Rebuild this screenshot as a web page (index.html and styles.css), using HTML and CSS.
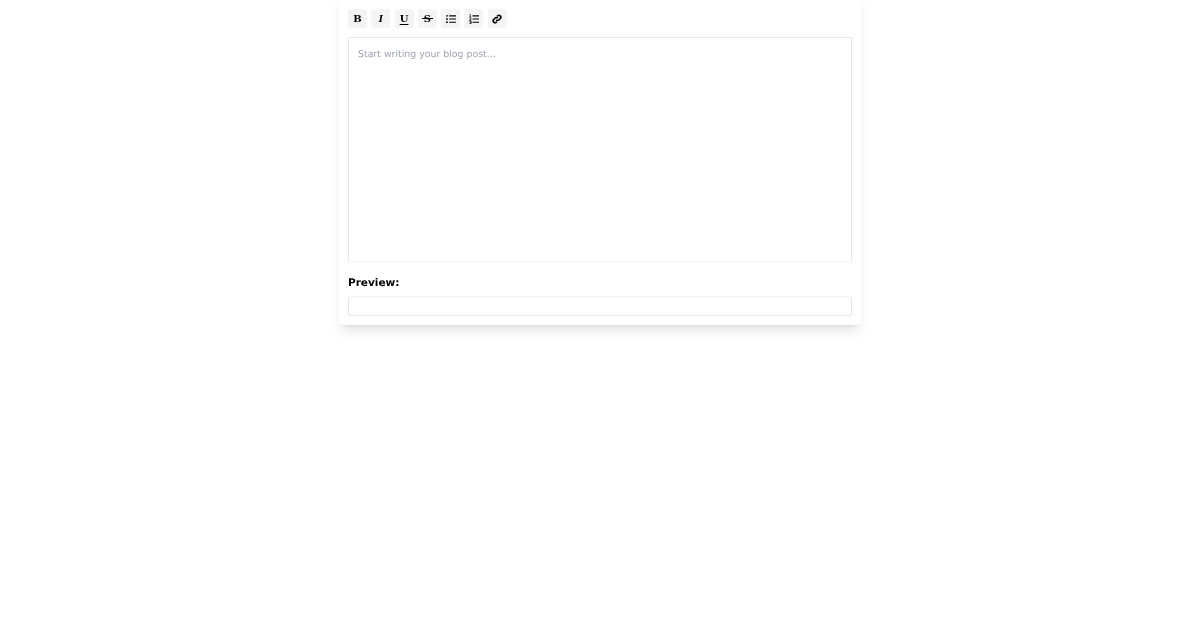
FILE: index.html
```html
<!DOCTYPE html>
<html lang="en">

<head>
	<meta charset="UTF-8">
	<title>Blog editor</title>
	<link rel="stylesheet" href="styles.css">
</head>

<body>

	<div class="card">

		<div class="toolbar">
			<button class="tool" type="button">B</button>
			<button class="tool tool-i" type="button">I</button>
			<button class="tool tool-u" type="button">U</button>
			<button class="tool tool-s" type="button">S</button>
			<button class="tool" type="button">
				<svg class="icon" viewBox="0 0 12 12">
					<circle cx="1.2" cy="2.2" r="1.1" />
					<circle cx="1.2" cy="6" r="1.1" />
					<circle cx="1.2" cy="9.8" r="1.1" />
					<path d="M3.8 2.2H12M3.8 6H12M3.8 9.8H12" class="line" />
				</svg>
			</button>
			<button class="tool" type="button">
				<svg class="icon" viewBox="0 0 12 12">
					<path d="M.5 .7h1.2v2.6M.4 3.5h2.4M.5 5h2v1.2l-2 1.2v.4h2.3M.5 9h2.2v2.4H.5M1.2 10.2h1.5" class="thin" />
					<path d="M4.2 2.2H12M4.2 6H12M4.2 9.8H12" class="line" />
				</svg>
			</button>
			<button class="tool" type="button">
				<svg class="icon" viewBox="0 0 12 12">
					<path d="M5 7a2.2 2.2 0 0 0 3.2.2l2-2a2.3 2.3 0 0 0-3.2-3.2l-.8.8" class="link" />
					<path d="M7 5a2.2 2.2 0 0 0-3.2-.2l-2 2A2.3 2.3 0 0 0 5 10l.8-.8" class="link" />
				</svg>
			</button>
		</div>

		<div class="editor">
			<span class="placeholder">Start writing your blog post...</span>
		</div>

		<div class="preview-label">Preview:</div>
		<div class="preview"></div>

	</div> <!-- end card -->

</body>

</html>
```

FILE: styles.css
```css
body {
	background: #fff;
	font-family: 'DejaVu Sans', sans-serif;
	margin: 0;
	min-height: 100vh;
	text-rendering: geometricPrecision;
}

.card {
	background: #fff;
	border-radius: 5px;
	box-shadow: 0 7.5px 11px -2px rgba(0, 0, 0, .1), 0 3px 4.5px -3px rgba(0, 0, 0, .1);
	box-sizing: border-box;
	height: 331px;
	margin: -6px auto 0;
	padding: 15px 9px 0;
	width: 522px;
	will-change: transform;
}

.toolbar {
	display: flex;
	gap: 4.3px;
	margin-bottom: 9px;
}

.tool {
	align-items: center;
	background: #f3f4f6;
	border: 0;
	border-radius: 3px;
	color: #000;
	display: flex;
	font-family: 'DejaVu Serif', serif;
	font-size: 10px;
	font-weight: 700;
	height: 19px;
	justify-content: center;
	padding: 0;
	position: relative;
	width: 19px;
}

.tool-i {
	font-stretch: condensed;
	font-style: italic;
}

.tool-u {
	text-decoration: underline;
	text-decoration-thickness: 1px;
	text-underline-offset: 1.5px;
}

.tool-s::after {
	background: #000;
	content: "";
	height: 1px;
	left: 4px;
	position: absolute;
	right: 4px;
	top: 9px;
}

.icon {
	display: block;
	height: 10px;
	width: 10px;
}

.line {
	fill: none;
	stroke: #000;
	stroke-width: 1.3;
}

.thin {
	fill: none;
	stroke: #000;
	stroke-width: .8;
}

.link {
	fill: none;
	stroke: #000;
	stroke-width: 2;
}

.editor {
	border: 1px solid #e5e7eb;
	border-bottom-color: #f1f2f4;
	border-radius: 2px;
	box-sizing: border-box;
	height: 225px;
	padding: 10px 9px;
}

.placeholder {
	color: #9ca3af;
	display: block;
	font-size: 9.4px;
	line-height: 14px;
}

.preview-label {
	color: #000;
	font-size: 10.5px;
	font-weight: 700;
	line-height: 14px;
	margin-top: 14px;
}

.preview {
	border: 1px solid #e5e7eb;
	border-top-color: #f1f2f4;
	border-radius: 2px;
	box-sizing: border-box;
	height: 20px;
	margin-top: 6px;
}
```
